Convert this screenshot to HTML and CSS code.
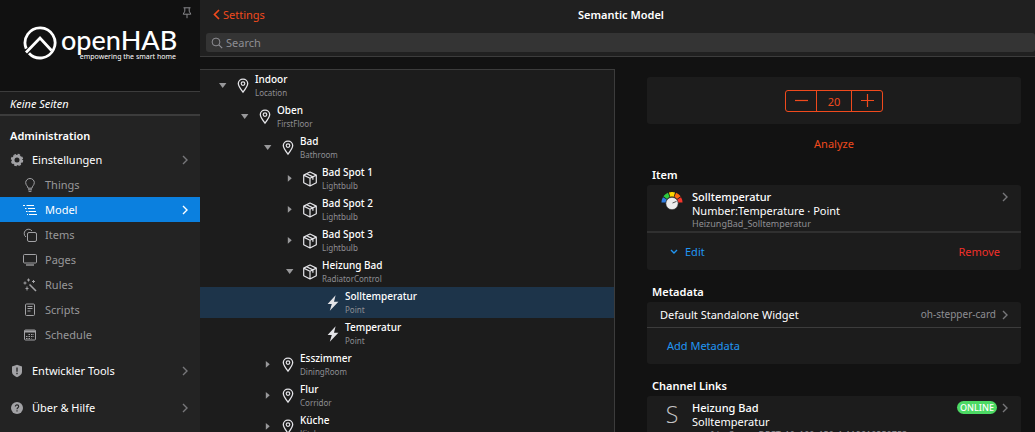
FILE: index.html
```html
<!DOCTYPE html>
<html lang="de">
  <head>
    <meta charset="UTF-8" />
    <meta name="viewport" content="width=device-width, initial-scale=1.0" />
    <title>Semantic Model</title>
    <link rel="stylesheet" href="styles.css">
  </head>
  <body>
    <!-- shared icons -->
    <svg class="sprite" aria-hidden="true">
      <symbol id="chevron" viewBox="0 0 6 10"><path d="M1 1l4 4-4 4" fill="none" stroke="currentColor" stroke-width="1.4" /></symbol>
      <symbol id="down" viewBox="0 0 8 6"><path d="M0 0.5h7.4L3.7 5.5z" fill="currentColor" /></symbol>
      <symbol id="right" viewBox="0 0 6 8"><path d="M0.5 0v7.6L5 3.8z" fill="currentColor" /></symbol>
      <symbol id="pin" viewBox="0 0 12 16"><path d="M6 14.2C3.2 10.6 1.3 8 1.3 5.6a4.7 4.5 0 0 1 9.4 0C10.7 8 8.8 10.6 6 14.2z" fill="none" stroke="currentColor" stroke-width="1.3" /><circle cx="6" cy="5.6" r="1.8" fill="none" stroke="currentColor" stroke-width="1.2" /></symbol>
      <symbol id="cube" viewBox="0 0 16 16"><path d="M8 1l6.3 3.1v7.6L8 15l-6.3-3.3V4.1zM1.7 4.1L8 7.3l6.3-3.2M8 7.3V15M4.6 2.7l6.3 3.2v2.8" fill="none" stroke="currentColor" stroke-width="1.2" stroke-linejoin="round" /></symbol>
      <symbol id="bolt" viewBox="0 0 12 16"><path d="M8.6 0.3L0.6 9h4.2L2.8 15.7 11.4 6.700H7z" fill="currentColor" /></symbol>
    </svg>

    <aside class="sidebar">
      <header class="brand">
        <svg class="brand-mark" viewBox="0 0 34 34">
          <path d="M3.2 22.6A15 15 0 1 1 30.5 23.5M6 27.2A15 15 0 0 0 30.5 23.5" fill="none" stroke="#fff" stroke-width="2.8" />
          <path d="M3 26.5L17 12l11.500 12.500" fill="none" stroke="#fff" stroke-width="2.8" />
        </svg>
        <div class="brand-text">
          <span class="brand-name">openHAB</span>
          <span class="brand-claim">empowering the smart home</span>
        </div>
        <button class="pin-button" aria-label="Anheften">
          <svg viewBox="0 0 10 12"><path d="M1.5 0.8h7M2.8 0.8v3.4L1.2 7.2h7.6L7.2 4.2V0.8M5 7.2v4" fill="none" stroke="currentColor" /></svg>
        </button>
      </header>
      <p class="no-pages">Keine Seiten</p>
      <nav class="menu">
        <h2>Administration</h2>
        <a class="menu-item" href="#">
          <svg class="icon" viewBox="0 0 14 14"><circle cx="7" cy="7" r="3.9" fill="none" stroke="currentColor" stroke-width="2.8" /><circle cx="7" cy="7" r="5.5" fill="none" stroke="currentColor" stroke-width="1.4" stroke-dasharray="2.6 1.72" /></svg>
          <span>Einstellungen</span>
          <svg class="chevron"><use href="#chevron" /></svg>
        </a>
        <a class="menu-item sub" href="#">
          <svg class="icon" viewBox="0 0 14 14"><path d="M5 10.2C5 8.2 2.7 7.3 2.7 4.6a4.3 4.1 0 0 1 8.6 0C11.3 7.3 9 8.2 9 10.2zM5 11.8h4M5.600 13.400h2.800" fill="none" stroke="currentColor" /></svg>
          <span>Things</span>
        </a>
        <a class="menu-item sub active" href="#">
          <svg class="icon" viewBox="0 0 14 14"><path d="M0 2.500h2M3.500 2.500H11M2 5.500h1.500M5 5.500h7M3 8.500h1.500M5.500 8.500H13M4 11.500h1M6 11.500h8" fill="none" stroke="currentColor" stroke-width="1.200" /></svg>
          <span>Model</span>
          <svg class="chevron"><use href="#chevron" /></svg>
        </a>
        <a class="menu-item sub" href="#">
          <svg class="icon" viewBox="0 0 14 14"><rect x="4.500" y="4.500" width="9" height="9" rx="1.500" fill="none" stroke="currentColor" /><path d="M3 9A4.300 4.300 0 1 1 9 3" fill="none" stroke="currentColor" /></svg>
          <span>Items</span>
        </a>
        <a class="menu-item sub" href="#">
          <svg class="icon" viewBox="0 0 14 14"><rect x="0.500" y="1.500" width="13" height="8.500" rx="1" fill="none" stroke="currentColor" /><path d="M3 12h8" stroke="currentColor" stroke-width="1.300" /></svg>
          <span>Pages</span>
        </a>
        <a class="menu-item sub" href="#">
          <svg class="icon" viewBox="0 0 14 14"><path d="M6.500 6.500l6.500 6.500" stroke="currentColor" stroke-width="1.600" /><path d="M5.500 0.500v3M4 2h3M10.500 2v3M9 3.500h3M2 3.500v3M0.500 5h3M4 8.500v4M2.500 10.500h3" stroke="currentColor" /></svg>
          <span>Rules</span>
        </a>
        <a class="menu-item sub" href="#">
          <svg class="icon" viewBox="0 0 14 14"><rect x="2.500" y="1" width="9" height="11.500" rx="1" fill="none" stroke="currentColor" /><path d="M4.500 3.500h5M4.500 5.500h5M4.500 8h3" stroke="currentColor" /></svg>
          <span>Scripts</span>
        </a>
        <a class="menu-item sub" href="#">
          <svg class="icon" viewBox="0 0 14 14"><rect x="1.500" y="2" width="11" height="10" rx="1" fill="none" stroke="currentColor" /><path d="M1.500 3.500h11" stroke="currentColor" stroke-width="2" /><path d="M5.500 6.500h5.500M3 8.500h8M3 10.500h5.500" stroke="currentColor" stroke-dasharray="1.500 1" /></svg>
          <span>Schedule</span>
        </a>
        <a class="menu-item section" href="#">
          <svg class="icon" viewBox="0 0 14 14"><path d="M7 0.800l5 1.700v5.500c0 2.600-2.400 4-5 5.200-2.600-1.200-5-2.600-5-5.200V2.500z" fill="currentColor" /><path d="M7 3.500v4.200M7 8.800v1.400" stroke="#232323" stroke-width="1.300" /></svg>
          <span>Entwickler Tools</span>
          <svg class="chevron"><use href="#chevron" /></svg>
        </a>
        <a class="menu-item section" href="#">
          <svg class="icon" viewBox="0 0 14 14"><circle cx="7" cy="7" r="6" fill="currentColor" /><path d="M5.300 5.600C5.300 3.300 8.700 3.400 8.700 5.500 8.700 6.800 7 6.800 7 8.300M7 9.200v1.200" fill="none" stroke="#232323" stroke-width="1.100" /></svg>
          <span>Über &amp; Hilfe</span>
          <svg class="chevron"><use href="#chevron" /></svg>
        </a>
      </nav>
    </aside>

    <main class="page">
      <header class="navbar">
        <div class="navbar-top">
          <a class="back" href="#">
            <svg viewBox="0 0 7 11"><path d="M6 1L1.500 5.500 6 10" fill="none" stroke="currentColor" stroke-width="1.700" /></svg>
            Settings
          </a>
          <h1>Semantic Model</h1>
        </div>
        <label class="search">
          <svg viewBox="0 0 12 12"><circle cx="5" cy="5" r="3.900" fill="none" stroke="currentColor" /><path d="M7.800 7.800l3.400 3.400" stroke="currentColor" stroke-width="1.200" /></svg>
          <input type="search" placeholder="Search" aria-label="Search" />
        </label>
      </header>

      <div class="content">
        <ul class="tree">
          <li class="node level-0"><svg class="toggle"><use href="#down" /></svg><svg class="node-icon"><use href="#pin" /></svg><div><b>Indoor</b><small>Location</small></div></li>
          <li class="node level-1"><svg class="toggle"><use href="#down" /></svg><svg class="node-icon"><use href="#pin" /></svg><div><b>Oben</b><small>FirstFloor</small></div></li>
          <li class="node level-2"><svg class="toggle"><use href="#down" /></svg><svg class="node-icon"><use href="#pin" /></svg><div><b>Bad</b><small>Bathroom</small></div></li>
          <li class="node level-3"><svg class="toggle"><use href="#right" /></svg><svg class="node-icon"><use href="#cube" /></svg><div><b>Bad Spot 1</b><small>Lightbulb</small></div></li>
          <li class="node level-3"><svg class="toggle"><use href="#right" /></svg><svg class="node-icon"><use href="#cube" /></svg><div><b>Bad Spot 2</b><small>Lightbulb</small></div></li>
          <li class="node level-3"><svg class="toggle"><use href="#right" /></svg><svg class="node-icon"><use href="#cube" /></svg><div><b>Bad Spot 3</b><small>Lightbulb</small></div></li>
          <li class="node level-3"><svg class="toggle"><use href="#down" /></svg><svg class="node-icon"><use href="#cube" /></svg><div><b>Heizung Bad</b><small>RadiatorControl</small></div></li>
          <li class="node level-4 selected"><svg class="toggle"></svg><svg class="node-icon"><use href="#bolt" /></svg><div><b>Solltemperatur</b><small>Point</small></div></li>
          <li class="node level-4"><svg class="toggle"></svg><svg class="node-icon"><use href="#bolt" /></svg><div><b>Temperatur</b><small>Point</small></div></li>
          <li class="node level-2"><svg class="toggle"><use href="#right" /></svg><svg class="node-icon"><use href="#pin" /></svg><div><b>Esszimmer</b><small>DiningRoom</small></div></li>
          <li class="node level-2"><svg class="toggle"><use href="#right" /></svg><svg class="node-icon"><use href="#pin" /></svg><div><b>Flur</b><small>Corridor</small></div></li>
          <li class="node level-2"><svg class="toggle"><use href="#right" /></svg><svg class="node-icon"><use href="#pin" /></svg><div><b>Küche</b><small>Kitchen</small></div></li>
        </ul>

        <div class="details">
          <div class="card stepper-card">
            <div class="stepper">
              <button aria-label="Weniger"><svg viewBox="0 0 13 13"><path d="M0 6.500h13" stroke="currentColor" stroke-width="1.200" /></svg></button>
              <output>20</output>
              <button aria-label="Mehr"><svg viewBox="0 0 13 13"><path d="M0 6.500h13M6.500 0v13" stroke="currentColor" stroke-width="1.200" /></svg></button>
            </div>
          </div>
          <a class="analyze" href="#">Analyze</a>

          <h2>Item</h2>
          <div class="card">
            <a class="item" href="#">
              <svg class="avatar" viewBox="0 0 22 18">
                <g fill="none" stroke-width="4.500">
                  <path d="M2.700 10.500A8.500 8.500 0 0 1 3.900 6.300" stroke="#2f7de1" />
                  <path d="M4.200 5.700A8.500 8.500 0 0 1 7.800 2.900" stroke="#2ecc40" />
                  <path d="M8.600 2.600A8.500 8.500 0 0 1 13.400 2.600" stroke="#ffd800" />
                  <path d="M14.200 2.900A8.500 8.500 0 0 1 17.800 5.700" stroke="#ff6a13" />
                  <path d="M18.100 6.300A8.500 8.500 0 0 1 19.300 10.500" stroke="#f5352b" />
                </g>
                <circle cx="11" cy="11.500" r="6.200" fill="#ececec" stroke="#1c1c1c" stroke-width="0.600" />
                <path d="M11.500 11l4-1.600" stroke="#555" stroke-width="1" />
              </svg>
              <div class="item-text">
                <b>Solltemperatur</b>
                <span>Number:Temperature · Point</span>
                <small>HeizungBad_Solltemperatur</small>
              </div>
              <svg class="chevron"><use href="#chevron" /></svg>
            </a>
            <div class="item-actions">
              <button class="edit"><svg viewBox="0 0 8 5"><path d="M1 1l3 3 3-3" fill="none" stroke="currentColor" stroke-width="1.400" /></svg>Edit</button>
              <button class="remove">Remove</button>
            </div>
          </div>

          <h2>Metadata</h2>
          <div class="card">
            <a class="meta-row" href="#">
              <span>Default Standalone Widget</span>
              <span class="after">oh-stepper-card</span>
              <svg class="chevron"><use href="#chevron" /></svg>
            </a>
            <a class="add" href="#">Add Metadata</a>
          </div>

          <h2>Channel Links</h2>
          <div class="card">
            <a class="item" href="#">
              <span class="letter">S</span>
              <div class="item-text">
                <b>Heizung Bad</b>
                <span>Solltemperatur</span>
                <small>avmfritz:Smart_DECT_10_100_150_1:119610250753:set_temp</small>
              </div>
              <span class="badge">ONLINE</span>
              <svg class="chevron"><use href="#chevron" /></svg>
            </a>
          </div>
        </div>
      </div>
    </main>
  </body>
</html>
```
FILE: styles.css
```css
:root {
  --accent: #f04a1d;
  --blue: #2196f3;
  --card: #1c1c1c;
  --line: #3c3c3c;
  --muted: #8e8e93;
}
* {
  box-sizing: border-box;
}
body {
  display: flex;
  height: 100vh;
  margin: 0;
  overflow: hidden;
  background: #121212;
  color: #fff;
  font: 11px/15px "Noto Sans", "Open Sans", sans-serif;
}
h1,
h2,
p,
ul {
  margin: 0;
  padding: 0;
}
a {
  color: inherit;
  text-decoration: none;
}
button {
  border: 0;
  padding: 0;
  background: none;
  color: inherit;
  font: inherit;
}
b,
h1,
h2 {
  font-size: 11px;
  font-weight: 600;
}
b {
  font-weight: 500;
}
.sprite {
  position: absolute;
  width: 0;
  height: 0;
}
.chevron {
  flex: none;
  width: 6px;
  height: 10px;
  color: #77777a;
}

/* sidebar */
.sidebar {
  flex: none;
  width: 200px;
  background: #232323;
}
.brand {
  position: relative;
  display: flex;
  align-items: center;
  height: 91px;
  padding: 0 23px 6px;
  gap: 4px;
  background: #111;
}
.brand-mark {
  flex: none;
  width: 34px;
  height: 34px;
}
.brand-text {
  display: flex;
  flex-direction: column;
  width: 115px;
}
.brand-name {
  font: 500 27px/27px Lato, sans-serif;
}
.brand-claim {
  align-self: flex-end;
  font-size: 7px;
  line-height: 7px;
  white-space: nowrap;
}
.pin-button {
  position: absolute;
  top: 7px;
  right: 8px;
  width: 10px;
  height: 12px;
  color: #88888c;
}
.pin-button svg {
  display: block;
}
.no-pages {
  height: 25px;
  padding: 0 10px;
  border-top: 1px solid var(--line);
  border-bottom: 2px solid var(--line);
  background: var(--card);
  font-style: italic;
  line-height: 23px;
}
.menu h2 {
  padding: 12px 10px 4px;
}
.menu-item {
  display: flex;
  align-items: center;
  gap: 8px;
  height: 25px;
  padding: 0 12px 0 10px;
}
.menu-item span {
  flex: 1;
}
.menu-item .icon {
  flex: none;
  width: 14px;
  height: 14px;
  color: #a2a2a5;
}
.menu-item.sub {
  padding-left: 23px;
  color: #98989a;
}
.menu-item.active,
.menu-item.active svg {
  background: #0b80df;
  color: #fff;
}
.menu-item.section {
  height: 37px;
}
.menu-item:not(.section) + .section {
  margin-top: 5px;
}

/* navbar */
.page {
  display: flex;
  flex: 1;
  flex-direction: column;
  min-width: 0;
}
.navbar {
  border-bottom: 1px solid var(--line);
  background: #202020;
}
.navbar-top {
  display: grid;
  grid-template-columns: 1fr auto 1fr;
  align-items: center;
  height: 33px;
  padding: 0 6px 5px 13px;
}
.back {
  display: flex;
  align-items: center;
  gap: 3px;
  color: var(--accent);
}
.back svg {
  width: 7px;
  height: 11px;
}
.search {
  display: flex;
  align-items: center;
  gap: 3px;
  height: 19px;
  margin: 0 0 4px 6px;
  padding: 0 5px;
  border-radius: 3px;
  background: #343434;
  color: var(--muted);
}
.search svg {
  width: 12px;
  height: 12px;
}
.search input {
  flex: 1;
  border: 0;
  padding: 0;
  outline: 0;
  background: none;
  color: #fff;
  font: inherit;
}
.search input::placeholder {
  color: var(--muted);
}

/* tree */
.content {
  display: grid;
  flex: 1;
  grid-template-columns: 83fr 84fr;
  min-height: 0;
}
.tree {
  margin-top: 12px;
  overflow: hidden;
  border: solid var(--line);
  border-width: 1px 1px 0 0;
  background: var(--card);
  list-style: none;
}
.node {
  display: flex;
  align-items: center;
  height: 31px;
  padding-left: 19px;
}
.level-1 {
  padding-left: 41px;
}
.level-2 {
  padding-left: 64px;
}
.level-3 {
  padding-left: 86px;
}
.level-4 {
  padding-left: 109px;
}
.node.selected {
  background: #1d344a;
}
.toggle {
  width: 8px;
  height: 7px;
  margin-right: 8px;
  color: #98989a;
}
.node-icon {
  width: 16px;
  height: 16px;
  margin-right: 4px;
  color: #e4e4e8;
}
.node b,
.node small {
  display: block;
}
.node b {
  font-size: 10px;
  line-height: 14px;
}
.node small {
  color: var(--muted);
  font-size: 8px;
  line-height: 13px;
}

/* details */
.details {
  display: flex;
  flex-direction: column;
  padding: 20px 14px 0 32px;
  overflow: hidden;
}
.card {
  flex: none;
  border-radius: 3px;
  background: var(--card);
}
.stepper-card {
  display: flex;
  align-items: center;
  justify-content: center;
  height: 47px;
}
.stepper {
  display: flex;
  height: 22px;
  border: 1px solid var(--accent);
  border-radius: 3px;
  color: var(--accent);
}
.stepper button {
  display: grid;
  place-items: center;
  width: 30px;
}
.stepper svg {
  width: 13px;
  height: 13px;
}
.stepper output {
  width: 36px;
  border: solid var(--accent);
  border-width: 0 1px;
  line-height: 21px;
  text-align: center;
}
.analyze {
  align-self: center;
  margin: 12px 0 2px;
  color: var(--accent);
}
.details h2 {
  margin: 14px 5px 3px;
}
.item {
  display: flex;
  align-items: flex-start;
  height: 46px;
  padding: 5px 13px 0 14px;
}
.avatar {
  width: 22px;
  height: 18px;
  margin: 2px 9px 0 0;
}
.item-text {
  display: flex;
  flex: 1;
  flex-direction: column;
  min-width: 0;
}
.item-text b,
.item-text span {
  line-height: 14px;
}
.item-text small {
  color: var(--muted);
  font-size: 9px;
  line-height: 12px;
}
.item .chevron {
  margin-top: 2px;
}
.item-actions {
  display: flex;
  align-items: center;
  justify-content: space-between;
  height: 39px;
  padding: 0 21px 0 23px;
  border-top: 2px solid #303030;
}
.edit {
  display: flex;
  align-items: center;
  gap: 7px;
  color: var(--blue);
}
.edit svg {
  width: 8px;
  height: 5px;
}
.remove {
  color: #f0302a;
}
.meta-row {
  display: flex;
  align-items: center;
  height: 26px;
  padding: 0 13px;
  border-bottom: 1px solid var(--line);
}
.after {
  margin: 0 6px 0 auto;
  color: var(--muted);
  font-size: 10px;
}
.add {
  display: block;
  padding: 0 20px;
  color: var(--blue);
  line-height: 36px;
}
.letter {
  width: 22px;
  margin-right: 9px;
  color: #c4c4c6;
  font: 300 23px/26px "Open Sans", sans-serif;
  text-align: center;
}
.badge {
  margin-right: 5px;
  padding: 0 3px;
  border-radius: 7px;
  background: #4cd964;
  font-size: 9px;
  font-weight: 500;
  line-height: 13px;
}
```
